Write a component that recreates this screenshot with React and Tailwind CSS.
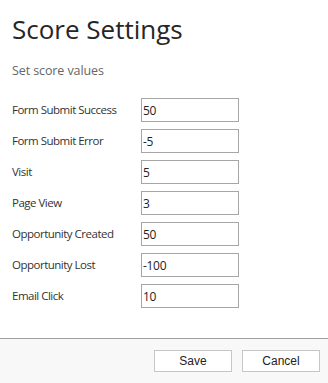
const rows = [
  { label: "Form Submit Success", value: "50" },
  { label: "Form Submit Error", value: "-5" },
  { label: "Visit", value: "5" },
  { label: "Page View", value: "3" },
  { label: "Opportunity Created", value: "50" },
  { label: "Opportunity Lost", value: "-100" },
  { label: "Email Click", value: "10" },
];

export default function App() {
  return (
    <div className="flex h-[383px] w-[328px] flex-col bg-white font-['Open_Sans',sans-serif] text-[#333]">
      <div className="flex-1">
        <h1 className="ml-[12px] mt-[12px] text-[26px] leading-[34px] font-normal text-[#262626]">
          Score Settings
        </h1>
        <p className="ml-[12px] mt-[17px] text-[12.5px] leading-[16px] tracking-[-0.1px] text-[#666]">Set score values</p>
        <div className="mt-[19px] flex flex-col gap-[7px]">
          {rows.map((r) => (
            <div key={r.label} className="flex items-center">
              <span className="w-[141px] pl-[12px] text-[11.5px] tracking-[-0.5px] text-[#333]">{r.label}</span>
              <input
                defaultValue={r.value}
                className="h-[24px] w-[98px] border border-[#a6a6a6] px-[1px] text-[12px] tracking-[-0.3px] text-[#222] outline-none"
              />
            </div>
          ))}
        </div>
      </div>
      <div className="flex h-[45px] justify-end gap-[10px] border-t border-[#a0a0a0] bg-[#f8f8f8] pr-[8px] pt-[11px]">
        <button className="h-[22px] w-[78px] border border-[#c6c6c6] bg-white font-['Liberation_Sans',sans-serif] text-[12px] text-[#222]">
          Save
        </button>
        <button className="h-[22px] w-[78px] border border-[#c6c6c6] bg-white font-['Liberation_Sans',sans-serif] text-[12px] text-[#222]">
          Cancel
        </button>
      </div>
    </div>
  );
}
